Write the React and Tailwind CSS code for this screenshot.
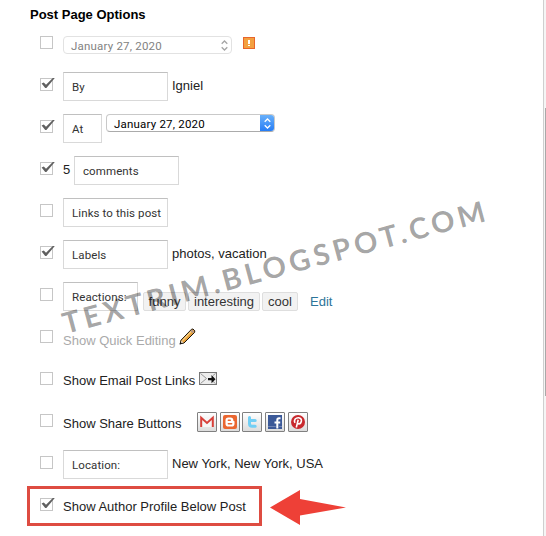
import React from 'react';

function Checkbox({ checked }) {
  return (
    <span className="mt-[6px] mr-[10px] block h-[13px] w-[13px] shrink-0 border border-[#c6c6c6] bg-white">
      {checked && (
        <svg width="15" height="13" viewBox="0 0 15 13" className="-mt-px -ml-px block overflow-visible">
          <path d="M1.6 5.6 L3.8 4.4 L6 6.7 L12.8 0 L14.8 0 L6.4 10 L5.2 10 Z" fill="#606060" />
        </svg>
      )}
    </span>
  );
}

function Field({ children, width = 'w-[105px]' }) {
  return (
    <span className={`${width} block h-[29px] shrink-0 border border-[#d9d9d9] border-t-[#c0c0c0] bg-white pl-2 pt-px font-[Roboto,sans-serif] text-[11.5px] leading-[27px] tracking-[0.1px] whitespace-nowrap text-[#333]`}>
      {children}
    </span>
  );
}

function Label({ children, className = 'mt-[6px]' }) {
  return <span className={`${className} block leading-4 whitespace-nowrap`}>{children}</span>;
}

function Row({ checked, children }) {
  return (
    <div className="relative flex h-[42px] items-start pl-[40px]">
      <Checkbox checked={checked} />
      {children}
    </div>
  );
}

function Arrows({ color }) {
  return (
    <svg width="7" height="11" viewBox="0 0 7 11" fill="none" stroke={color} strokeWidth="1.3">
      <path d="M0.7 3.8 L3.5 1 L6.3 3.8 M0.7 7.2 L3.5 10 L6.3 7.2" />
    </svg>
  );
}

function ShareIcon({ children }) {
  return (
    <span className="flex h-5 w-5 items-center justify-center rounded-[1px] border border-[#808080] bg-linear-to-b from-white to-[#dcdcdc]">
      <svg width="16" height="16" viewBox="0 0 16 16">{children}</svg>
    </span>
  );
}

function Chip({ children, width }) {
  return (
    <span className={`${width} block h-[19px] rounded-[2px] border border-[#dedede] bg-[#f2f2f2] text-center leading-[17px] text-[#333]`}>
      {children}
    </span>
  );
}

export default function App() {
  return (
    <div className="relative flex h-[536px] w-[546px] overflow-hidden bg-white font-['Liberation_Sans',Arial,sans-serif] text-[13px] text-[#222]">
      <div className="w-[543px] shrink-0">
        <h2 className="h-[30px] pt-[7px] pl-[30px] text-[13px] leading-4 font-bold text-black">Post Page Options</h2>

        <Row>
          <span className="mt-[6px] flex h-[18px] w-[169px] items-center justify-between rounded-[4px] border border-[#e2e2e2] pr-[3px] pl-[7px] font-[Roboto,sans-serif] text-[11.5px] tracking-[0.2px] text-[#828282]">
            <span className="pt-px leading-4">January 27, 2020</span>
            <Arrows color="#a5a5a5" />
          </span>
          <svg width="12" height="12" viewBox="0 0 12 12" className="mt-[7px] ml-[11px]">
            <rect width="12" height="12" fill="#e8652b" />
            <rect x="1" y="1" width="10" height="10" fill="#f3a040" />
            <path d="M5 3h2v4H5z M5 8h2v1H5z" fill="#fff" />
          </svg>
        </Row>

        <Row checked>
          <Field>By</Field>
          <Label className="mt-[6px] ml-1">Igniel</Label>
        </Row>

        <Row checked>
          <Field width="w-[39px]">At</Field>
          <span className="ml-1 flex h-[18px] w-[169px] items-center justify-between overflow-hidden rounded-[4px] border border-[#c9c9c9] border-b-[#ababab] pl-[7px] font-[Roboto,sans-serif] text-[11.5px] tracking-[0.2px] text-black">
            <span className="pt-px leading-4">January 27, 2020</span>
            <span className="-my-px -mr-px flex h-[18px] w-[15px] items-center justify-center bg-linear-to-b from-[#6cb3fa] to-[#2079f5]">
              <Arrows color="#fff" />
            </span>
          </span>
        </Row>

        <Row checked>
          <Label className="mt-[6px] mr-1 w-[7px]">5</Label>
          <Field>comments</Field>
        </Row>

        <Row>
          <Field>Links to this post</Field>
        </Row>

        <Row checked>
          <Field>Labels</Field>
          <Label className="mt-[6px] ml-1">photos, vacation</Label>
        </Row>

        <Row>
          <Field width="w-[75px]">Reactions:</Field>
          <div className="mt-[10px] ml-[5px] flex gap-[2px]">
            <Chip width="w-[43px]">funny</Chip>
            <Chip width="w-[72px]">interesting</Chip>
            <Chip width="w-[36px]">cool</Chip>
          </div>
          <a className="mt-[12px] ml-[12px] leading-4 text-[#2d7499]">Edit</a>
        </Row>

        <Row>
          <Label className="mt-[9px] w-[113px] text-[#aaa]">Show Quick Editing</Label>
          <svg width="17" height="17" viewBox="0 0 17 17" className="mt-[4px] ml-[3px]">
            <path d="M1.2 15.8 L2 12.2 L12.6 1.2 L14 1 L15.8 2.8 L15.6 4.4 L5 15 Z" fill="#e9a23b" stroke="#1a1208" strokeWidth="1" />
            <path d="M3.4 12.6 L12 3.5" stroke="#f8d48c" strokeWidth="1.1" />
            <path d="M11.5 3 L13 1.6 L15.2 3.8 L13.8 5.3 Z" fill="#b5998b" />
            <path d="M1.6 15.4 L2.4 12.6 L4.6 14.6 Z" fill="#d9cdbc" />
            <path d="M0.5 16.5 L1.3 14 L3.2 15.8 Z" fill="#111" />
          </svg>
        </Row>

        <Row>
          <Label className="mt-[7px] w-[133px]">Show Email Post Links</Label>
          <svg width="18" height="13" viewBox="0 0 18 13" className="mt-[6px] ml-[3px]">
            <rect x="0.5" y="0.5" width="17" height="12" fill="#ededed" stroke="#777" />
            <path d="M1.5 1.5 L7.5 6.5 L1.5 11.5 M16.5 1.5 L14 3.5 M16.5 11.5 L14 9.5" fill="none" stroke="#999" />
            <path d="M9 6 h3.5 v-3 l4 4.3 l-4 4 v-3 h-3.5 z" fill="#111" />
          </svg>
        </Row>

        <Row>
          <Label className="mt-[8px] w-[134px]">Show Share Buttons</Label>
          <div className="mt-[4px] flex gap-[2.7px]">
            <ShareIcon>
              <path d="M2 3 h12 v10 h-12 z" fill="#f6f6f6" />
              <path d="M2.2 13 V3.8 L8 9 L13.8 3.8 V13" fill="none" stroke="#d8403a" strokeWidth="2" />
            </ShareIcon>
            <ShareIcon>
              <rect x="1" y="1" width="14" height="14" rx="2" fill="#ea6630" />
              <path d="M6.3 3.5 h2.2 a2.8 2.8 0 0 1 2.8 2.8 q0 .8 1.2 .9 v2.5 a2.8 2.8 0 0 1 -2.8 2.8 h-3.4 a2.8 2.8 0 0 1 -2.8 -2.8 v-3.4 a2.8 2.8 0 0 1 2.8 -2.8 z" fill="#fff" />
              <path d="M6.3 6.3 h2 M6.3 9.7 h3.4" stroke="#ea6630" strokeWidth="1.4" strokeLinecap="round" />
            </ShareIcon>
            <ShareIcon>
              <path d="M5.5 3.4 V9.8 Q5.5 12.2 8 12.2 H11.2 M5.5 6.4 H11.2" fill="none" stroke="#72cff5" strokeWidth="3" strokeLinecap="round" />
            </ShareIcon>
            <ShareIcon>
              <rect x="1" y="1" width="14" height="14" fill="#3b5998" />
              <path d="M13.5 4.2 H12 Q10.3 4.2 10.3 6 V14.5 M7.5 8.4 H13.2" fill="none" stroke="#fff" strokeWidth="2" />
              <path d="M1 12.5 H8.8 M11.5 12.5 H15" stroke="#7084b4" />
            </ShareIcon>
            <ShareIcon>
              <circle cx="8" cy="8" r="7" fill="#c8282d" />
              <path d="M5 8.8 Q3.8 6.8 5.2 5 Q6.6 3.5 8.7 3.7 Q11.6 4 11.4 6.9 Q11 10 8.8 9.9 Q7.6 9.8 7.4 8.8 M8.2 5.8 L6.3 13.5" fill="none" stroke="#fff" strokeWidth="1.6" />
            </ShareIcon>
          </div>
        </Row>

        <Row>
          <Field>Location:</Field>
          <Label className="mt-[6px] ml-1">New York, New York, USA</Label>
        </Row>

        <Row checked>
          <Label className="mt-[7px]">Show Author Profile Below Post</Label>
          {/* callout around the last option */}
          <span className="absolute top-[-6px] left-[27px] h-[40px] w-[235px] border-3 border-[#de4c41]" />
          <svg width="76" height="35" viewBox="0 0 76 35" className="absolute top-[-2px] left-[270px]">
            <path d="M0 17.5 L30 0 V9 L76 17.5 L30 25.5 V35 Z" fill="#ee4037" />
          </svg>
        </Row>
      </div>

      {/* scrollbar */}
      <div className="h-full w-[3px] shrink-0 border-l border-[#cfcfcf] bg-[#f5f5f5] pt-[108px] pl-px">
        <div className="h-[288px] bg-[#a9a9a9]" />
      </div>

      <div className="absolute top-[309px] left-[59px] origin-top-left rotate-[-15.05deg] font-[Lato,sans-serif] text-[29px] leading-[29px] font-bold tracking-[4.1px] whitespace-nowrap text-black/37">
        TEXTRIM.BLOGSPOT.COM
      </div>
    </div>
  );
}
